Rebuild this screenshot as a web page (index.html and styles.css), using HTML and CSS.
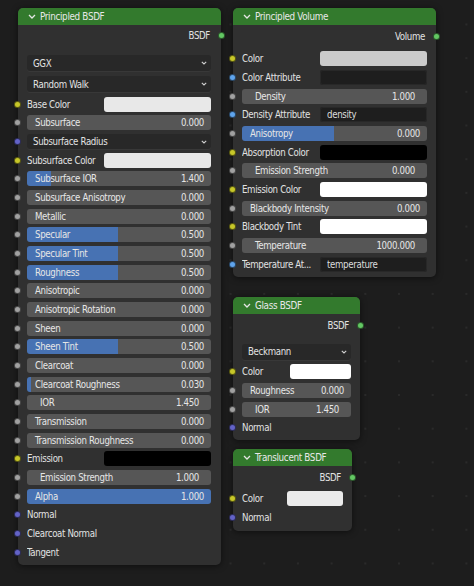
FILE: index.html
```html
<!DOCTYPE html>
<html>
<head>
<meta charset="utf-8">
<link rel="stylesheet" href="styles.css">
</head>
<body>
<div class="canvas">

  <div class="node n1">
    <div class="hdr"><svg class="chev" width="8" height="5" viewBox="0 0 8 5"><path d="M1 1 L4 4 L7 1" fill="none" stroke="#e6e6e6" stroke-width="1.3"/></svg><span>Principled BSDF</span></div>
    <div class="body">
      <div class="r out"><span>BSDF</span><i class="sk g"></i></div>
      <div class="dd first"><span>GGX</span><svg width="6" height="4" viewBox="0 0 6 4"><path d="M0.8 0.8 L3 3 L5.2 0.8" fill="none" stroke="#d0d0d0" stroke-width="1.1"/></svg></div>
      <div class="dd second"><span>Random Walk</span><svg width="6" height="4" viewBox="0 0 6 4"><path d="M0.8 0.8 L3 3 L5.2 0.8" fill="none" stroke="#d0d0d0" stroke-width="1.1"/></svg></div>
      <div class="r firstin"><i class="sk y"></i><span class="lbl">Base Color</span><div class="sw c-e8"></div></div>
      <div class="r"><i class="sk f"></i><div class="sl"><span>Subsurface</span><span>0.000</span></div></div>
      <div class="r"><i class="sk v"></i><div class="dd in"><span>Subsurface Radius</span><svg width="6" height="4" viewBox="0 0 6 4"><path d="M0.8 0.8 L3 3 L5.2 0.8" fill="none" stroke="#d0d0d0" stroke-width="1.1"/></svg></div></div>
      <div class="r"><i class="sk y"></i><span class="lbl">Subsurface Color</span><div class="sw c-e8"></div></div>
      <div class="r"><i class="sk f"></i><div class="sl" style="--f:13%"><span>Subsurface IOR</span><span>1.400</span></div></div>
      <div class="r"><i class="sk f"></i><div class="sl"><span>Subsurface Anisotropy</span><span>0.000</span></div></div>
      <div class="r"><i class="sk f"></i><div class="sl"><span>Metallic</span><span>0.000</span></div></div>
      <div class="r"><i class="sk f"></i><div class="sl" style="--f:49.5%"><span>Specular</span><span>0.500</span></div></div>
      <div class="r"><i class="sk f"></i><div class="sl" style="--f:49.5%"><span>Specular Tint</span><span>0.500</span></div></div>
      <div class="r"><i class="sk f"></i><div class="sl" style="--f:49.5%"><span>Roughness</span><span>0.500</span></div></div>
      <div class="r"><i class="sk f"></i><div class="sl"><span>Anisotropic</span><span>0.000</span></div></div>
      <div class="r"><i class="sk f"></i><div class="sl"><span>Anisotropic Rotation</span><span>0.000</span></div></div>
      <div class="r"><i class="sk f"></i><div class="sl"><span>Sheen</span><span>0.000</span></div></div>
      <div class="r"><i class="sk f"></i><div class="sl" style="--f:49.5%"><span>Sheen Tint</span><span>0.500</span></div></div>
      <div class="r"><i class="sk f"></i><div class="sl"><span>Clearcoat</span><span>0.000</span></div></div>
      <div class="r"><i class="sk f"></i><div class="sl" style="--f:2%"><span>Clearcoat Roughness</span><span>0.030</span></div></div>
      <div class="r"><i class="sk f"></i><div class="sl num"><span>IOR</span><span>1.450</span></div></div>
      <div class="r"><i class="sk f"></i><div class="sl"><span>Transmission</span><span>0.000</span></div></div>
      <div class="r"><i class="sk f"></i><div class="sl"><span>Transmission Roughness</span><span>0.000</span></div></div>
      <div class="r"><i class="sk y"></i><span class="lbl">Emission</span><div class="sw c-00"></div></div>
      <div class="r"><i class="sk f"></i><div class="sl num"><span>Emission Strength</span><span>1.000</span></div></div>
      <div class="r"><i class="sk f"></i><div class="sl" style="--f:100%"><span>Alpha</span><span>1.000</span></div></div>
      <div class="r"><i class="sk v"></i><span class="lbl">Normal</span></div>
      <div class="r"><i class="sk v"></i><span class="lbl">Clearcoat Normal</span></div>
      <div class="r"><i class="sk v"></i><span class="lbl">Tangent</span></div>
    </div>
  </div>

  <div class="node n2">
    <div class="hdr"><svg class="chev" width="8" height="5" viewBox="0 0 8 5"><path d="M1 1 L4 4 L7 1" fill="none" stroke="#e6e6e6" stroke-width="1.3"/></svg><span>Principled Volume</span></div>
    <div class="body">
      <div class="r out"><span>Volume</span><i class="sk g"></i></div>
      <div class="r firstin"><i class="sk y"></i><span class="lbl">Color</span><div class="sw c-cb"></div></div>
      <div class="r"><i class="sk s"></i><span class="lbl">Color Attribute</span><div class="tf"></div></div>
      <div class="r"><i class="sk f"></i><div class="sl num"><span>Density</span><span>1.000</span></div></div>
      <div class="r"><i class="sk s"></i><span class="lbl">Density Attribute</span><div class="tf"><span>density</span></div></div>
      <div class="r"><i class="sk f"></i><div class="sl" style="--f:50%"><span>Anisotropy</span><span>0.000</span></div></div>
      <div class="r"><i class="sk y"></i><span class="lbl">Absorption Color</span><div class="sw c-00"></div></div>
      <div class="r"><i class="sk f"></i><div class="sl num"><span>Emission Strength</span><span>0.000</span></div></div>
      <div class="r"><i class="sk y"></i><span class="lbl">Emission Color</span><div class="sw c-ff"></div></div>
      <div class="r"><i class="sk f"></i><div class="sl"><span>Blackbody Intensity</span><span>0.000</span></div></div>
      <div class="r"><i class="sk y"></i><span class="lbl">Blackbody Tint</span><div class="sw c-ff"></div></div>
      <div class="r"><i class="sk f"></i><div class="sl num"><span>Temperature</span><span>1000.000</span></div></div>
      <div class="r"><i class="sk s"></i><span class="lbl">Temperature At...</span><div class="tf"><span>temperature</span></div></div>
    </div>
  </div>

  <div class="node n3">
    <div class="hdr"><svg class="chev" width="8" height="5" viewBox="0 0 8 5"><path d="M1 1 L4 4 L7 1" fill="none" stroke="#e6e6e6" stroke-width="1.3"/></svg><span>Glass BSDF</span></div>
    <div class="body">
      <div class="r out"><span>BSDF</span><i class="sk g"></i></div>
      <div class="dd first"><span>Beckmann</span><svg width="6" height="4" viewBox="0 0 6 4"><path d="M0.8 0.8 L3 3 L5.2 0.8" fill="none" stroke="#d0d0d0" stroke-width="1.1"/></svg></div>
      <div class="r firstin"><i class="sk y"></i><span class="lbl">Color</span><div class="sw c-ff"></div></div>
      <div class="r"><i class="sk f"></i><div class="sl"><span>Roughness</span><span>0.000</span></div></div>
      <div class="r"><i class="sk f"></i><div class="sl num"><span>IOR</span><span>1.450</span></div></div>
      <div class="r"><i class="sk v"></i><span class="lbl">Normal</span></div>
    </div>
  </div>

  <div class="node n4">
    <div class="hdr"><svg class="chev" width="8" height="5" viewBox="0 0 8 5"><path d="M1 1 L4 4 L7 1" fill="none" stroke="#e6e6e6" stroke-width="1.3"/></svg><span>Translucent BSDF</span></div>
    <div class="body">
      <div class="r out"><span>BSDF</span><i class="sk g"></i></div>
      <div class="r firstin"><i class="sk y"></i><span class="lbl">Color</span><div class="sw c-eb"></div></div>
      <div class="r"><i class="sk v"></i><span class="lbl">Normal</span></div>
    </div>
  </div>

</div>
</body>
</html>
```
FILE: styles.css
```css
html, body {
  margin: 0;
  padding: 0;
}
body {
  width: 474px;
  height: 586px;
  overflow: hidden;
  background-color: #1d1d1d;
  background-image: radial-gradient(circle, #2a2a2a 0.9px, rgba(0,0,0,0) 1.4px);
  background-size: 33.7px 33.7px;
  background-position: 11.6px 7.6px;
  font-family: "DejaVu Sans Condensed", "DejaVu Sans", sans-serif;
  font-size: 9.6px;
  letter-spacing: -0.33px;
  color: #e2e2e2;
}
.canvas {
  position: relative;
  width: 474px;
  height: 586px;
}
.node {
  position: absolute;
  background: #303030;
  border-radius: 5px;
  box-shadow: 0 1px 6px rgba(0, 0, 0, 0.55);
  display: flex;
  flex-direction: column;
}
.n1 { left: 18px; top: 8px; width: 203px; height: 557px; }
.n2 { left: 233px; top: 8px; width: 203px; height: 269px; }
.n3 { left: 233px; top: 297px; width: 127px; height: 143px; }
.n4 { left: 233px; top: 449px; width: 119px; height: 82px; }

.hdr {
  height: 17px;
  flex: 0 0 17px;
  background: #337a2d;
  border-radius: 5px 5px 0 0;
  display: flex;
  align-items: center;
  color: #e8e8e8;
  font-size: 9.8px;
}
.hdr .chev {
  margin-left: 10px;
  margin-right: 4px;
}
.body {
  display: flex;
  flex-direction: column;
  padding-top: 1.67px;
}
.n2 .body, .n3 .body, .n4 .body { padding-top: 2.67px; }

.r {
  position: relative;
  height: 18.67px;
  flex: 0 0 18.67px;
  display: flex;
  align-items: center;
  padding: 0 10px 0 9px;
  box-sizing: border-box;
}
.n2 .r, .n3 .r, .n4 .r { padding-right: 9px; }
.r.out {
  justify-content: flex-end;
  padding-right: 11px;
}
.n1 .firstin { margin-top: 2.67px; }
.n2 .firstin { margin-top: 3.33px; }
.n3 .firstin { margin-top: 2.67px; }
.n4 .firstin { margin-top: 2.33px; }

.sk {
  position: absolute;
  left: -4px;
  top: 50%;
  width: 7px;
  height: 7px;
  margin-top: -3.5px;
  border-radius: 50%;
  box-sizing: border-box;
  border: 0.8px solid rgba(0, 0, 0, 0.55);
}
.out .sk { left: auto; right: -3.5px; }
.sk.g { background: #63c763; }
.sk.y { background: #c7c729; }
.sk.f { background: #a1a1a1; }
.sk.v { background: #6363c7; }
.sk.s { background: #5fa4ec; }

.lbl {
  flex: 1;
  white-space: nowrap;
  overflow: hidden;
  color: #e2e2e2;
}

.sw, .tf {
  height: 15px;
  border-radius: 3px;
  flex: 0 0 107px;
}
.n3 .sw { flex-basis: 61px; }
.n4 .sw { flex-basis: 56px; }
.c-e8 { background: #e8e8e8; }
.c-eb { background: #ebebeb; }
.c-cb { background: #cbcbcb; }
.c-ff { background: #ffffff; }
.c-00 { background: #000000; }
.tf {
  background: #1e1e1e;
  box-shadow: inset 0 0 0 1px #282828;
  display: flex;
  align-items: center;
  padding-left: 7px;
  box-sizing: border-box;
  color: #dcdcdc;
}

.sl {
  --f: 0%;
  flex: 1;
  height: 15px;
  border-radius: 3px;
  background: linear-gradient(to right, #4772b3 var(--f), #565656 var(--f));
  display: flex;
  align-items: center;
  justify-content: space-between;
  padding: 0 7px 0 8px;
  box-sizing: border-box;
  color: #e6e6e6;
  white-space: nowrap;
}
.sl.num { padding: 0 12px 0 13px; }

.dd {
  height: 16px;
  flex: 0 0 16px;
  margin: 0 10px 0 9px;
  background: #282828;
  border-radius: 3px;
  box-shadow: 0 1px 0 rgba(255, 255, 255, 0.04);
  display: flex;
  align-items: center;
  justify-content: space-between;
  padding: 0 4px 0 6px;
  box-sizing: border-box;
  color: #e2e2e2;
}
.dd.first { margin-top: 10px; }
.dd.second { margin-top: 5px; }
.n3 .dd { margin-right: 9px; }
.n3 .dd.first { margin-top: 8.67px; }
.dd.in {
  flex: 1;
  height: 15px;
  margin: 0;
}
```
